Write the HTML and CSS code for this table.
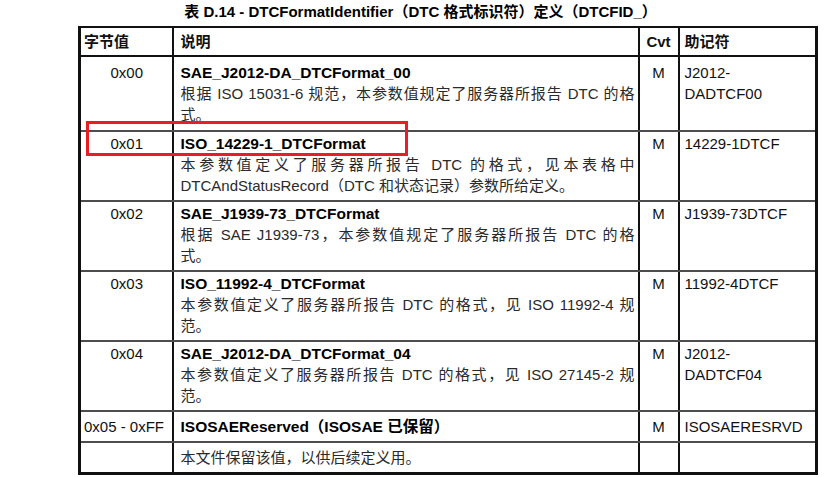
FILE: index.html
```html
<!DOCTYPE html>
<html lang="zh">
<head>
<meta charset="utf-8">
<title>DTCFormatIdentifier</title>
<link rel="stylesheet" href="styles.css">
</head>
<body>
<div class="page">
  <h1 class="caption">表 D.14 - DTCFormatIdentifier（DTC 格式标识符）定义（DTCFID_）</h1>
  <div class="table-wrap">
    <table class="spec">
      <colgroup>
        <col class="c-val">
        <col class="c-desc">
        <col class="c-cvt">
        <col class="c-mn">
      </colgroup>
      <thead>
        <tr class="head">
          <th class="val-h">字节值</th>
          <th class="desc-h">说明</th>
          <th class="cvt">Cvt</th>
          <th class="mn-h">助记符</th>
        </tr>
      </thead>
      <tbody>
        <tr class="r-tall">
          <td class="val">0x00</td>
          <td class="desc">
            <div class="name">SAE_J2012-DA_DTCFormat_00</div>
            <div class="jl">根据 ISO 15031-6 规范，本参数值规定了服务器所报告 DTC 的格</div>
            <div class="ll">式。</div>
          </td>
          <td class="cvt">M</td>
          <td class="mn">J2012-<br>DADTCF00</td>
        </tr>
        <tr class="r-mid">
          <td class="val">0x01</td>
          <td class="desc">
            <div class="name">ISO_14229-1_DTCFormat</div>
            <div class="jl">本参数值定义了服务器所报告 DTC 的格式，见本表格中</div>
            <div class="ll">DTCAndStatusRecord（DTC 和状态记录）参数所给定义。</div>
          </td>
          <td class="cvt">M</td>
          <td class="mn">14229-1DTCF</td>
        </tr>
        <tr class="r-mid">
          <td class="val">0x02</td>
          <td class="desc">
            <div class="name">SAE_J1939-73_DTCFormat</div>
            <div class="jl">根据 SAE J1939-73，本参数值规定了服务器所报告 DTC 的格</div>
            <div class="ll">式。</div>
          </td>
          <td class="cvt">M</td>
          <td class="mn">J1939-73DTCF</td>
        </tr>
        <tr class="r-mid">
          <td class="val">0x03</td>
          <td class="desc">
            <div class="name">ISO_11992-4_DTCFormat</div>
            <div class="jl">本参数值定义了服务器所报告 DTC 的格式，见 ISO 11992-4 规</div>
            <div class="ll">范。</div>
          </td>
          <td class="cvt">M</td>
          <td class="mn">11992-4DTCF</td>
        </tr>
        <tr class="r-mid">
          <td class="val">0x04</td>
          <td class="desc">
            <div class="name">SAE_J2012-DA_DTCFormat_04</div>
            <div class="jl">本参数值定义了服务器所报告 DTC 的格式，见 ISO 27145-2 规</div>
            <div class="ll">范。</div>
          </td>
          <td class="cvt">M</td>
          <td class="mn">J2012-<br>DADTCF04</td>
        </tr>
        <tr class="r-one">
          <td class="val val-wide">0x05 - 0xFF</td>
          <td class="desc"><div class="name">ISOSAEReserved（ISOSAE 已保留）</div></td>
          <td class="cvt">M</td>
          <td class="mn">ISOSAERESRVD</td>
        </tr>
        <tr class="r-one">
          <td class="val"></td>
          <td class="desc"><div class="ll">本文件保留该值，以供后续定义用。</div></td>
          <td class="cvt"></td>
          <td class="mn"></td>
        </tr>
      </tbody>
    </table>
    <div class="highlight"></div>
  </div>
</div>
</body>
</html>
```
FILE: styles.css
```css
html, body {
  margin: 0;
  padding: 0;
  background: #ffffff;
}

body {
  font-family: "Liberation Sans", "Noto Sans CJK SC", Arial, sans-serif;
  color: #111;
}

.page {
  width: 839px;
  height: 477px;
  overflow: hidden;
}

.caption {
  margin: 0;
  height: 26px;
  line-height: 24px;
  font-size: 15px;
  font-weight: bold;
  text-align: center;
  padding-left: 2px;
  color: #000;
}

.table-wrap {
  position: relative;
  margin-left: 78px;
  width: 737px;
}

.spec {
  border-collapse: collapse;
  table-layout: fixed;
  width: 737px;
  font-size: 15px;
  line-height: 21px;
}

.c-val { width: 93px; }
.c-desc { width: 466px; }
.c-cvt { width: 40px; }
.c-mn { width: 138px; }

.spec th,
.spec td {
  border-left: 2px solid #111;
  border-right: 2px solid #111;
  border-top: 2px solid #4d4d4d;
  border-bottom: 2px solid #4d4d4d;
  vertical-align: top;
  text-align: left;
  padding: 2px 4px 4px 5px;
}

.spec thead th {
  border-top: 2px solid #111;
  border-bottom: 2px solid #111;
  font-weight: bold;
  padding-top: 3px;
  padding-bottom: 3px;
}

.spec tr > :first-child { border-left-width: 3px; }
.spec tr > :last-child { border-right-width: 3px; }
.spec tbody tr:last-child td { border-bottom: 3px solid #111; }

.spec th.val-h { padding-left: 3px; }
.spec th.desc-h { padding-left: 7px; }

.spec td.val { text-align: center; }

.spec td.val-wide {
  padding-left: 3px;
  padding-right: 0;
  white-space: nowrap;
  text-align: left;
}

.spec .cvt {
  text-align: center;
  padding-left: 2px;
  padding-right: 2px;
}

.spec td.mn { padding-left: 5px; }

.spec td.desc {
  padding-left: 7px;
  padding-right: 3px;
}

.r-tall td { padding-top: 5px; padding-bottom: 5px; }
.r-mid td { padding-top: 1px; padding-bottom: 4px; }
.r-one td { padding-top: 4px; padding-bottom: 4px; }

.name {
  font-weight: bold;
  color: #000;
  font-size: 15.5px;
}

.jl,
.ll {
  color: #2a2a2a;
  font-size: 15px;
}

.jl {
  text-align: justify;
  text-align-last: justify;
}

.highlight {
  position: absolute;
  left: 8px;
  top: 95px;
  width: 316px;
  height: 29px;
  border: 3px solid #ea1c24;
  pointer-events: none;
}
```
